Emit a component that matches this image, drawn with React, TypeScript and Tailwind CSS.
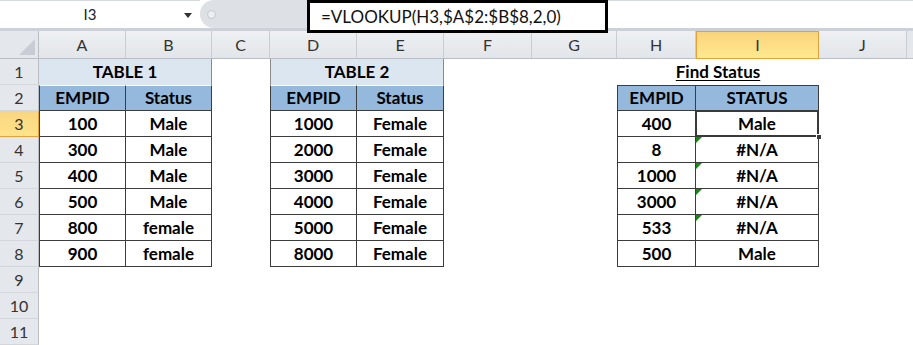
import React from 'react';

const GRID =
  'grid grid-cols-[39px_87px_86px_58px_87px_87px_88px_85px_79px_123px_88px_1fr] grid-rows-[28px] auto-rows-[26px]';

const columns = ['A', 'B', 'C', 'D', 'E', 'F', 'G', 'H', 'I', 'J'];

const table1 = [
  ['100', 'Male'],
  ['300', 'Male'],
  ['400', 'Male'],
  ['500', 'Male'],
  ['800', 'female'],
  ['900', 'female'],
];

const table2 = [
  ['1000', 'Female'],
  ['2000', 'Female'],
  ['3000', 'Female'],
  ['4000', 'Female'],
  ['5000', 'Female'],
  ['8000', 'Female'],
];

const lookups = [
  ['400', 'Male'],
  ['8', '#N/A'],
  ['1000', '#N/A'],
  ['3000', '#N/A'],
  ['533', '#N/A'],
  ['500', 'Male'],
];

const cellBase = 'flex items-center justify-center text-[17px] font-bold text-black';
const dataLeft = `${cellBase} border-l border-r border-b border-[#3c3c3c]`;
const dataRight = `${cellBase} border-r border-b border-[#3c3c3c]`;

function RowHeader({ n, active }: { n: number; active?: boolean }) {
  return (
    <div
      className={
        active
          ? 'flex items-center justify-center border-b border-r border-[#e3a33a] bg-linear-to-b from-[#f9d581] to-[#ffe38a] text-[16px] text-[#333]'
          : 'flex items-center justify-center border-b border-r border-b-[#d3d7dc] border-r-[#b9bec5] bg-[#e4e7eb] text-[16px] text-[#333]'
      }
    >
      {n}
    </div>
  );
}

function ErrorMark() {
  return (
    <span className="absolute left-0 top-0 h-0 w-0 border-r-[6px] border-t-[6px] border-r-transparent border-t-[#128a12]" />
  );
}

export default function App() {
  return (
    <div className="h-[345px] w-[913px] overflow-hidden bg-white font-[Lato,sans-serif]">
      {/* name box + formula bar */}
      <div className="flex h-[31px] items-start border-b-[3px] border-[#cdd1d7] bg-white">
        <div className="relative flex h-[28px] w-[200px] items-center border-t border-[#d5d8dd]">
          <span className="w-[180px] text-center text-[15px] text-[#222]">I3</span>
          <span className="absolute left-[184px] top-[12px] h-0 w-0 border-l-[4px] border-r-[4px] border-t-[5px] border-l-transparent border-r-transparent border-t-[#333]" />
        </div>
        <div className="flex h-[28px] w-[107px] items-center rounded-l-full bg-[#dde1e6] pl-[7px]">
          <span className="h-[9px] w-[9px] rounded-full border border-[#c4c8ce] bg-[#eceef1]" />
        </div>
        <div className="relative z-10 flex h-[33px] w-[301px] items-center border-[3px] border-black bg-white pl-[11px] text-[17px] text-[#111]">
          =VLOOKUP(H3,$A$2:$B$8,2,0)
        </div>
        <div className="h-[28px] flex-1 border-t border-[#d5d8dd]" />
      </div>

      <div className={GRID}>
        {/* column headers */}
        <div className="relative border-b border-r border-[#b9bec5] bg-[#e4e7eb]">
          <span className="absolute bottom-[3px] right-[3px] h-0 w-0 border-b-[16px] border-l-[16px] border-b-[#c9cdd3] border-l-transparent" />
        </div>
        {columns.map((c) =>
          c === 'I' ? (
            <div
              key={c}
              className="flex items-center justify-center border border-[#e3a33a] bg-linear-to-b from-[#f9d37c] to-[#ffe98f] text-[16px] text-[#333]"
            >
              {c}
            </div>
          ) : (
            <div
              key={c}
              className="flex items-center justify-center border-b border-r border-b-[#b9bec5] border-r-[#c9cdd3] bg-linear-to-b from-[#eef0f3] to-[#e2e5e9] text-[16px] text-[#333]"
            >
              {c}
            </div>
          ),
        )}
        <div className="border-b border-[#b9bec5] bg-[#e4e7eb]" />

        {/* row 1 */}
        <RowHeader n={1} />
        <div className={`${cellBase} col-span-2 border-r border-[#8a8a8a] bg-[#dce6f1]`}>TABLE 1</div>
        <div />
        <div className={`${cellBase} col-span-2 border-l border-r border-[#8a8a8a] bg-[#dce6f1]`}>TABLE 2</div>
        <div />
        <div />
        <div className={`${cellBase} col-span-2`}>
          <span className="underline decoration-1 underline-offset-2">Find Status</span>
        </div>
        <div />
        <div />

        {/* row 2 */}
        <RowHeader n={2} />
        <div className={`${dataLeft} border-t border-t-white bg-[#95b8dd]`}>EMPID</div>
        <div className={`${dataRight} border-t border-t-white bg-[#95b8dd]`}>Status</div>
        <div />
        <div className={`${dataLeft} border-t border-t-white bg-[#95b8dd]`}>EMPID</div>
        <div className={`${dataRight} border-t border-t-white bg-[#95b8dd]`}>Status</div>
        <div />
        <div />
        <div className={`${dataLeft} border-t bg-[#95b8dd]`}>EMPID</div>
        <div className={`${dataRight} border-t bg-[#95b8dd]`}>STATUS</div>
        <div />
        <div />

        {/* rows 3-8 */}
        {table1.map((r, i) => (
          <React.Fragment key={i}>
            <RowHeader n={i + 3} active={i === 0} />
            <div className={dataLeft}>{r[0]}</div>
            <div className={dataRight}>{r[1]}</div>
            <div />
            <div className={dataLeft}>{table2[i][0]}</div>
            <div className={dataRight}>{table2[i][1]}</div>
            <div />
            <div />
            <div className={dataLeft}>{lookups[i][0]}</div>
            {i === 0 ? (
              <div className={`${dataRight} relative`}>
                <span className="absolute -left-px -top-px h-[calc(100%+2px)] w-[calc(100%+2px)] border-2 border-[#3a3a3a]" />
                {lookups[i][1]}
                <span className="absolute -bottom-[4px] -right-[4px] h-[6px] w-[6px] border border-white bg-[#3a3a3a]" />
              </div>
            ) : (
              <div className={`${dataRight} relative`}>
                {i < 5 && <ErrorMark />}
                {lookups[i][1]}
              </div>
            )}
            <div />
            <div />
          </React.Fragment>
        ))}

        {/* rows 9-11 */}
        {[9, 10, 11].map((n) => (
          <React.Fragment key={n}>
            <RowHeader n={n} />
            <div className="col-span-11" />
          </React.Fragment>
        ))}
      </div>
    </div>
  );
}
